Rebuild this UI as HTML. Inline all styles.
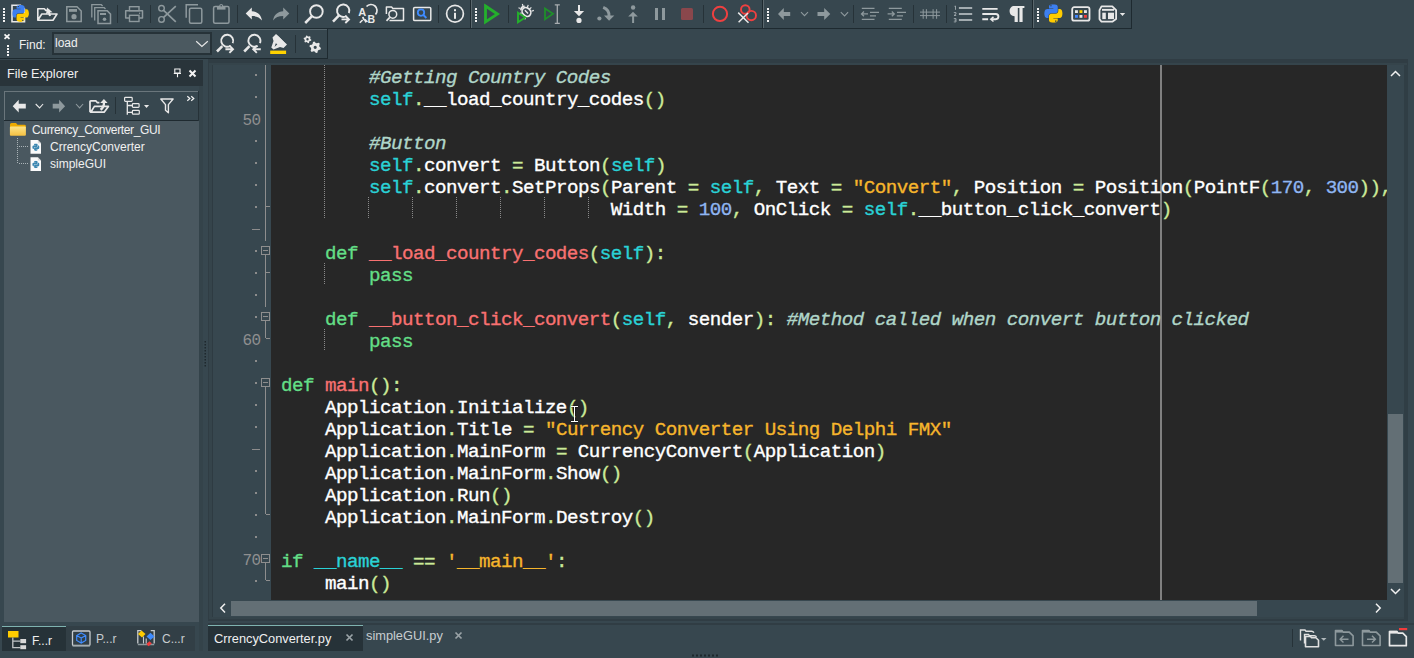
<!DOCTYPE html>
<html><head><meta charset="utf-8"><style>
*{box-sizing:border-box}
html,body{margin:0;padding:0;width:1414px;height:658px;overflow:hidden;background:#37474f;font-family:"Liberation Sans",sans-serif;position:relative}
.a{position:absolute}
#ov{position:absolute;left:0;top:0;width:1414px;height:658px;overflow:visible}
#code{position:absolute;left:271px;top:65px;width:1116px;height:535px;background:#272727;overflow:hidden}
#code pre{position:absolute;left:10px;top:1.5px;margin:0;font-family:"Liberation Mono",monospace;font-size:19.2px;letter-spacing:-0.52px;line-height:22px;color:#ffffff;white-space:pre;-webkit-text-stroke:0.35px currentColor}
.cm{color:#b0d6c9;font-style:italic}
.kw{color:#63de86}
.fn{color:#f87171}
.sf{color:#2ad2d6}
.op{color:#cbea98}
.st{color:#f6b52c}
.nu{color:#8fb6f2}
.ln{position:absolute;font-family:"Liberation Mono",monospace;font-size:16px;letter-spacing:-0.6px;color:#8f8f8f;text-align:right;width:40px;left:220.5px}
.ui{position:absolute;font-family:"Liberation Sans",sans-serif;color:#f0f0f0;white-space:pre}
</style></head><body>
<div class="a" style="left:0px;top:28px;width:470px;height:1px;background:#1e2a30;"></div>
<div class="a" style="left:470px;top:0px;width:1px;height:29px;background:#1e2a30;"></div>
<div class="a" style="left:470px;top:28px;width:292px;height:1px;background:#1e2a30;"></div>
<div class="a" style="left:762px;top:0px;width:1px;height:29px;background:#1e2a30;"></div>
<div class="a" style="left:762px;top:28px;width:270px;height:1px;background:#1e2a30;"></div>
<div class="a" style="left:1032px;top:0px;width:1px;height:29px;background:#1e2a30;"></div>
<div class="a" style="left:1032px;top:28px;width:99px;height:1px;background:#1e2a30;"></div>
<div class="a" style="left:1131px;top:0px;width:1px;height:29px;background:#1e2a30;"></div>
<div class="a" style="left:471px;top:0px;width:1px;height:28px;background:#5a676d;"></div>
<div class="a" style="left:0px;top:29px;width:327px;height:1px;background:#56656c;"></div>
<div class="a" style="left:0px;top:58px;width:328px;height:1px;background:#1e2a30;"></div>
<div class="a" style="left:327px;top:29px;width:1px;height:30px;background:#1e2a30;"></div>
<div class="ui" style="left:19px;top:38px;font-size:12px;color:#f0f0f0;">Find:</div>
<div class="a" style="left:52px;top:32px;width:160px;height:23px;background:#263238;"></div>
<div class="a" style="left:54px;top:34px;width:156px;height:19px;background:#4b5960;"></div>
<div class="ui" style="left:55px;top:36px;font-size:12px;color:#f0f0f0;">load</div>
<div class="a" style="left:0px;top:60px;width:203px;height:26px;background:#29343a;"></div>
<div class="ui" style="left:7px;top:67px;font-size:12.7px;color:#f0f0f0;">File Explorer</div>
<div class="a" style="left:4px;top:91px;width:195px;height:30px;background:#6a767c;"></div>
<div class="a" style="left:5px;top:92px;width:194px;height:28px;background:#37474f;"></div>
<div class="a" style="left:4px;top:120px;width:195px;height:1px;background:#1f2a30;"></div>
<div class="a" style="left:198px;top:91px;width:1px;height:30px;background:#263238;"></div>
<div class="a" style="left:4px;top:121px;width:196px;height:501px;background:#4a5860;"></div>
<div class="ui" style="left:32px;top:123px;font-size:12px;color:#f0f0f0;letter-spacing:-0.35px">Currency_Converter_GUI</div>
<div class="ui" style="left:50px;top:140px;font-size:12px;color:#f0f0f0;">CrrencyConverter</div>
<div class="ui" style="left:50px;top:157px;font-size:12px;color:#f0f0f0;">simpleGUI</div>
<div class="a" style="left:2px;top:626px;width:193px;height:25px;background:#323f46;"></div>
<div class="a" style="left:2px;top:626px;width:64px;height:25px;background:#263238;"></div>
<div class="a" style="left:2px;top:626px;width:64px;height:1px;background:#7fb3b0;"></div>
<div class="ui" style="left:32px;top:634px;font-size:12px;color:#f0f0f0;">F...r</div>
<div class="ui" style="left:96px;top:632px;font-size:12px;color:#c8cdd0;">P...r</div>
<div class="ui" style="left:162px;top:632px;font-size:12px;color:#c8cdd0;">C...r</div>
<div class="a" style="left:199px;top:86px;width:4px;height:565px;background:#34434a;"></div>
<div class="a" style="left:208px;top:59px;width:1200px;height:562px;background:#303d44;"></div>
<div class="a" style="left:209px;top:63px;width:1198px;height:556px;background:#35444b;"></div>
<div class="a" style="left:212px;top:65px;width:1192px;height:552px;background:#37474f;"></div>
<div class="a" style="left:212px;top:65px;width:1px;height:552px;background:#2e3b42;"></div>
<div class="a" style="left:1404px;top:65px;width:4px;height:556px;background:#303e45;"></div>
<div class="a" style="left:255px;top:74px;width:2px;height:2px;background:#8c8c8c;"></div>
<div class="a" style="left:255px;top:96px;width:2px;height:2px;background:#8c8c8c;"></div>
<div class="ln" style="top:112px">50</div>
<div class="a" style="left:255px;top:140px;width:2px;height:2px;background:#8c8c8c;"></div>
<div class="a" style="left:255px;top:162px;width:2px;height:2px;background:#8c8c8c;"></div>
<div class="a" style="left:255px;top:184px;width:2px;height:2px;background:#8c8c8c;"></div>
<div class="a" style="left:255px;top:206px;width:2px;height:2px;background:#8c8c8c;"></div>
<div class="a" style="left:252px;top:229px;width:8px;height:1px;background:#8c8c8c;"></div>
<div class="a" style="left:255px;top:250px;width:2px;height:2px;background:#8c8c8c;"></div>
<div class="a" style="left:255px;top:272px;width:2px;height:2px;background:#8c8c8c;"></div>
<div class="a" style="left:255px;top:294px;width:2px;height:2px;background:#8c8c8c;"></div>
<div class="a" style="left:255px;top:316px;width:2px;height:2px;background:#8c8c8c;"></div>
<div class="ln" style="top:332px">60</div>
<div class="a" style="left:255px;top:360px;width:2px;height:2px;background:#8c8c8c;"></div>
<div class="a" style="left:255px;top:382px;width:2px;height:2px;background:#8c8c8c;"></div>
<div class="a" style="left:255px;top:404px;width:2px;height:2px;background:#8c8c8c;"></div>
<div class="a" style="left:255px;top:426px;width:2px;height:2px;background:#8c8c8c;"></div>
<div class="a" style="left:252px;top:449px;width:8px;height:1px;background:#8c8c8c;"></div>
<div class="a" style="left:255px;top:470px;width:2px;height:2px;background:#8c8c8c;"></div>
<div class="a" style="left:255px;top:492px;width:2px;height:2px;background:#8c8c8c;"></div>
<div class="a" style="left:255px;top:514px;width:2px;height:2px;background:#8c8c8c;"></div>
<div class="a" style="left:255px;top:536px;width:2px;height:2px;background:#8c8c8c;"></div>
<div class="ln" style="top:552px">70</div>
<div class="a" style="left:255px;top:580px;width:2px;height:2px;background:#8c8c8c;"></div>
<div class="a" style="left:265px;top:65px;width:1px;height:176px;background:#8e8e8e;"></div>
<div class="a" style="left:266px;top:206px;width:4px;height:1px;background:#8e8e8e;"></div>
<div class="a" style="left:261px;top:246px;width:9px;height:9px;border:1px solid #8e8e8e"><div class="a" style="left:1px;top:3px;width:5px;height:1px;background:#8e8e8e"></div></div>
<div class="a" style="left:265px;top:255px;width:1px;height:52px;background:#8e8e8e;"></div>
<div class="a" style="left:266px;top:272px;width:4px;height:1px;background:#8e8e8e;"></div>
<div class="a" style="left:261px;top:312px;width:9px;height:9px;border:1px solid #8e8e8e"><div class="a" style="left:1px;top:3px;width:5px;height:1px;background:#8e8e8e"></div></div>
<div class="a" style="left:265px;top:321px;width:1px;height:17px;background:#8e8e8e;"></div>
<div class="a" style="left:266px;top:338px;width:4px;height:1px;background:#8e8e8e;"></div>
<div class="a" style="left:261px;top:378px;width:9px;height:9px;border:1px solid #8e8e8e"><div class="a" style="left:1px;top:3px;width:5px;height:1px;background:#8e8e8e"></div></div>
<div class="a" style="left:265px;top:387px;width:1px;height:127px;background:#8e8e8e;"></div>
<div class="a" style="left:266px;top:514px;width:4px;height:1px;background:#8e8e8e;"></div>
<div class="a" style="left:261px;top:554px;width:9px;height:9px;border:1px solid #8e8e8e"><div class="a" style="left:1px;top:3px;width:5px;height:1px;background:#8e8e8e"></div></div>
<div class="a" style="left:265px;top:563px;width:1px;height:17px;background:#8e8e8e;"></div>
<div class="a" style="left:266px;top:580px;width:4px;height:1px;background:#8e8e8e;"></div>
<div id="code"><div class="a" style="left:53px;top:0px;width:1px;height:154px;background-image:linear-gradient(#8a8a8a 50%,transparent 50%);background-size:1px 2px"></div><div class="a" style="left:97px;top:132px;width:1px;height:22px;background-image:linear-gradient(#8a8a8a 50%,transparent 50%);background-size:1px 2px"></div><div class="a" style="left:141px;top:132px;width:1px;height:22px;background-image:linear-gradient(#8a8a8a 50%,transparent 50%);background-size:1px 2px"></div><div class="a" style="left:185px;top:132px;width:1px;height:22px;background-image:linear-gradient(#8a8a8a 50%,transparent 50%);background-size:1px 2px"></div><div class="a" style="left:229px;top:132px;width:1px;height:22px;background-image:linear-gradient(#8a8a8a 50%,transparent 50%);background-size:1px 2px"></div><div class="a" style="left:273px;top:132px;width:1px;height:22px;background-image:linear-gradient(#8a8a8a 50%,transparent 50%);background-size:1px 2px"></div><div class="a" style="left:317px;top:132px;width:1px;height:22px;background-image:linear-gradient(#8a8a8a 50%,transparent 50%);background-size:1px 2px"></div><div class="a" style="left:53px;top:198px;width:1px;height:22px;background-image:linear-gradient(#8a8a8a 50%,transparent 50%);background-size:1px 2px"></div><div class="a" style="left:53px;top:264px;width:1px;height:22px;background-image:linear-gradient(#8a8a8a 50%,transparent 50%);background-size:1px 2px"></div><div class="a" style="left:889px;top:0;width:2px;height:535px;background:#808080"></div><pre>        <span class="cm">#Getting Country Codes</span>
        <span class="sf">self</span><span class="op">.</span>__load_country_codes<span class="op">()</span>

        <span class="cm">#Button</span>
        <span class="sf">self</span><span class="op">.</span>convert <span class="op">=</span> Button<span class="op">(</span><span class="sf">self</span><span class="op">)</span>
        <span class="sf">self</span><span class="op">.</span>convert<span class="op">.</span>SetProps<span class="op">(</span>Parent <span class="op">=</span> <span class="sf">self</span><span class="op">,</span> Text <span class="op">=</span> <span class="st">"Convert"</span><span class="op">,</span> Position <span class="op">=</span> Position<span class="op">(</span>PointF<span class="op">(</span><span class="nu">170</span><span class="op">,</span> <span class="nu">300</span><span class="op">)),</span>
                              Width <span class="op">=</span> <span class="nu">100</span><span class="op">,</span> OnClick <span class="op">=</span> <span class="sf">self</span><span class="op">.</span>__button_click_convert<span class="op">)</span>

    <span class="kw">def</span> <span class="fn">__load_country_codes</span><span class="op">(</span><span class="sf">self</span><span class="op">):</span>
        <span class="kw">pass</span>

    <span class="kw">def</span> <span class="fn">__button_click_convert</span><span class="op">(</span><span class="sf">self</span><span class="op">,</span> sender<span class="op">):</span> <span class="cm">#Method called when convert button clicked</span>
        <span class="kw">pass</span>

<span class="kw">def</span> <span class="fn">main</span><span class="op">():</span>
    Application<span class="op">.</span>Initialize<span class="op">()</span>
    Application<span class="op">.</span>Title <span class="op">=</span> <span class="st">"Currency Converter Using Delphi FMX"</span>
    Application<span class="op">.</span>MainForm <span class="op">=</span> CurrencyConvert<span class="op">(</span>Application<span class="op">)</span>
    Application<span class="op">.</span>MainForm<span class="op">.</span>Show<span class="op">()</span>
    Application<span class="op">.</span>Run<span class="op">()</span>
    Application<span class="op">.</span>MainForm<span class="op">.</span>Destroy<span class="op">()</span>

<span class="kw">if</span> <span class="sf">__name__</span> <span class="op">==</span> <span class="st">'__main__'</span><span class="op">:</span>
    main<span class="op">()</span></pre></div>
<div class="a" style="left:1388px;top:414px;width:15px;height:169px;background:#636f75;"></div>
<div class="a" style="left:231px;top:601px;width:1026px;height:15px;background:#636f75;"></div>
<div class="a" style="left:208px;top:623px;width:1206px;height:2px;background:#303d44;"></div>
<div class="a" style="left:208px;top:625px;width:155px;height:26px;background:#263238;"></div>
<div class="a" style="left:208px;top:625px;width:155px;height:1px;background:#7fb3b0;"></div>
<div class="ui" style="left:214px;top:631px;font-size:12.8px;color:#f0f0f0;">CrrencyConverter.py</div>
<div class="ui" style="left:366px;top:628px;font-size:12.8px;color:#c8cdd0;">simpleGUI.py</div>
<svg id="ov" width="1414" height="658" viewBox="0 0 1414 658">
<defs><symbol id="py" viewBox="0 0 112 112"><path fill="#3d7ff0" d="M54.9 0.1C50.3 0.1 45.9 0.5 42.1 1.2 30.8 3.2 28.8 7.4 28.8 15.1V25.3H55.2V28.7H18.9C11.2 28.7 4.5 33.3 2.4 42.1 0 52.2-0.1 58.5 2.4 69 4.3 76.8 8.7 82.4 16.4 82.4H25.5V70.2C25.5 61.5 33.1 53.8 42.1 53.8H68.5C75.9 53.8 81.7 47.7 81.7 40.4V15.1C81.7 7.9 75.7 2.5 68.5 1.3 63.9 0.5 59.2 0.1 54.9 0.1ZM40.6 4.5A4.6 4.6 0 1 1 40.6 13.7 4.6 4.6 0 1 1 40.6 4.5Z"/><path fill="#ffcc00" d="M85.2 28.7V40.5C85.2 49.7 77.4 57.3 68.5 57.3H42.1C34.9 57.3 28.8 63.5 28.8 70.7V96C28.8 103.2 35.1 107.4 42.1 109.5 50.5 112 58.6 112.4 68.5 109.5 75.1 107.6 81.7 103.7 81.7 96V85.9H55.2V82.5H94.9C102.6 82.5 105.4 77.1 108.1 69 110.8 60.7 110.7 52.8 108.1 42.2 106.2 34.6 102.6 28.7 94.9 28.7ZM70 97.3A4.6 4.6 0 1 1 70 106.5 4.6 4.6 0 1 1 70 97.3Z"/></symbol><symbol id="pyd" viewBox="0 0 112 112"><path fill="#3b86b0" d="M54.9 0.1C50.3 0.1 45.9 0.5 42.1 1.2 30.8 3.2 28.8 7.4 28.8 15.1V25.3H55.2V28.7H18.9C11.2 28.7 4.5 33.3 2.4 42.1 0 52.2-0.1 58.5 2.4 69 4.3 76.8 8.7 82.4 16.4 82.4H25.5V70.2C25.5 61.5 33.1 53.8 42.1 53.8H68.5C75.9 53.8 81.7 47.7 81.7 40.4V15.1C81.7 7.9 75.7 2.5 68.5 1.3 63.9 0.5 59.2 0.1 54.9 0.1Z"/><path fill="#3b86b0" d="M85.2 28.7V40.5C85.2 49.7 77.4 57.3 68.5 57.3H42.1C34.9 57.3 28.8 63.5 28.8 70.7V96C28.8 103.2 35.1 107.4 42.1 109.5 50.5 112 58.6 112.4 68.5 109.5 75.1 107.6 81.7 103.7 81.7 96V85.9H55.2V82.5H94.9C102.6 82.5 105.4 77.1 108.1 69 110.8 60.7 110.7 52.8 108.1 42.2 106.2 34.6 102.6 28.7 94.9 28.7Z"/></symbol></defs>
<rect x="3" y="8" width="2" height="2" fill="#f4f4f4"/>
<rect x="3" y="11" width="2" height="2" fill="#f4f4f4"/>
<rect x="3" y="14" width="2" height="2" fill="#f4f4f4"/>
<rect x="3" y="17" width="2" height="2" fill="#f4f4f4"/>
<rect x="3" y="20" width="2" height="2" fill="#f4f4f4"/>
<path d="M12 5.2h8.5l4 4v12.6h-12.5z" fill="none" stroke="#e8e8e8" stroke-width="1.6"/>
<use href="#py" x="12.2" y="5" width="17" height="17"/>
<path d="M37.8 20.2v-11.4h6.5l1.5 1.6h3.5M37.8 20.2l4-6.2h15.2l-4 6.2z" fill="none" stroke="#e8e8e8" stroke-width="1.6" stroke-linejoin="round"/>
<path d="M47 7.5l5.5 4.8-2.5 0.2 1 3.2-2 0.6-1-3.2-2 1.2z" fill="#e8e8e8"/>
<path d="M66.8 6.8h10.2l4.2 4.2v10.4h-14.4z" fill="none" stroke="#8e999d" stroke-width="1.5"/>
<rect x="69" y="9" width="8" height="2.8" fill="#8e999d"/><circle cx="74" cy="16.7" r="2.6" fill="#8e999d"/>
<path d="M91.8 17.5v-12.8h9.5l1.3 1.3" fill="none" stroke="#8e999d" stroke-width="1.3"/>
<path d="M94.7 20.5v-12.8h9.5l1.3 1.3" fill="none" stroke="#8e999d" stroke-width="1.3"/>
<path d="M98 10.8h9.2l3.3 3.3v9.3h-12.5z" fill="none" stroke="#8e999d" stroke-width="1.5"/>
<rect x="100" y="13" width="6" height="2" fill="#8e999d"/><circle cx="104.5" cy="19.2" r="1.8" fill="#8e999d"/>
<rect x="117" y="5" width="1" height="18" fill="#263238"/>
<rect x="129.5" y="6.7" width="9.5" height="4" fill="none" stroke="#8e999d" stroke-width="1.4"/>
<path d="M129 18h-3.3v-7.2h16.8v7.2h-3.3" fill="none" stroke="#8e999d" stroke-width="1.5" stroke-linejoin="round"/>
<rect x="129.5" y="15.3" width="9.5" height="6.2" fill="none" stroke="#8e999d" stroke-width="1.4"/>
<circle cx="139.6" cy="13.3" r="0.7" fill="#8e999d"/>
<rect x="150" y="5" width="1" height="18" fill="#263238"/>
<circle cx="161.5" cy="8.3" r="2.8" fill="none" stroke="#8e999d" stroke-width="1.4"/><circle cx="161.5" cy="19.4" r="2.8" fill="none" stroke="#8e999d" stroke-width="1.4"/>
<path d="M163.6 10.3L175.8 21.8M163.6 17.4L175.8 6.2" stroke="#8e999d" stroke-width="1.7"/>
<path d="M186.2 17.8V4.8h11.8" fill="none" stroke="#8e999d" stroke-width="1.5"/>
<rect x="189.5" y="8.3" width="12.3" height="15" rx="1.5" fill="none" stroke="#8e999d" stroke-width="1.5"/>
<rect x="213.6" y="6.5" width="15.4" height="16.8" rx="1.5" fill="none" stroke="#8e999d" stroke-width="1.5"/>
<rect x="217" y="6" width="8.5" height="3.6" fill="#8e999d"/><circle cx="221.2" cy="5.8" r="1.9" fill="#8e999d"/><circle cx="221.2" cy="5.8" r="0.8" fill="#37474f"/>
<rect x="237" y="5" width="1" height="18" fill="#263238"/>
<path d="M245.7 13.5L251.8 7.6V11.2C257.5 11.6 261.2 15 262 20.6 259.6 17.5 256.5 16.1 251.8 16.1V19.4Z" fill="#e8e8e8"/>
<path d="M289.3 13.5L283.2 7.6V11.2C277.5 11.6 273.8 15 273 20.6 275.4 17.5 278.5 16.1 283.2 16.1V19.4Z" fill="#8e999d"/>
<rect x="297" y="5" width="1" height="18" fill="#263238"/>
<circle cx="316.4" cy="11.5" r="6.3" fill="none" stroke="#e8e8e8" stroke-width="1.9"/><path d="M312 16.2L305.2 23" stroke="#e8e8e8" stroke-width="2.5"/>
<path d="M346.5 16A6.2 6.2 0 1 1 348.9 13.2" fill="none" stroke="#e8e8e8" stroke-width="1.9"/><path d="M338.8 15.6L333 21.6" stroke="#e8e8e8" stroke-width="2.5"/>
<path d="M341.5 19.4h7.5M345.3 15.8l3.7 3.6-3.7 3.6" fill="none" stroke="#e8e8e8" stroke-width="1.9"/>
<text x="358.3" y="15.8" font-family="Liberation Sans" font-weight="bold" font-size="11" fill="#e8e8e8">A</text>
<path d="M366.5 6.5A6 6 0 1 1 375.5 14.5" fill="none" stroke="#e8e8e8" stroke-width="1.7"/>
<text x="367.6" y="22.8" font-family="Liberation Sans" font-weight="bold" font-size="10.5" fill="#e8e8e8">B</text>
<path d="M359.8 22.8L362.6 20M362.8 16.8q0.3 3 3.8 4.3M365.2 19.8l1.6 1.4-2 0.9" fill="none" stroke="#e8e8e8" stroke-width="1.6"/>
<path d="M386.4 14v-7h5.2l1.3 1.6h10.6v12h-14" fill="none" stroke="#e8e8e8" stroke-width="1.5" stroke-linejoin="round"/>
<circle cx="392.8" cy="14.3" r="3.9" fill="#37474f" stroke="#e8e8e8" stroke-width="1.5"/><path d="M389.8 17.4L386.5 20.8" stroke="#e8e8e8" stroke-width="1.7"/>
<rect x="413.6" y="7.4" width="17.2" height="13.2" rx="1.2" fill="none" stroke="#e8e8e8" stroke-width="1.5"/>
<circle cx="421" cy="12.6" r="3.2" fill="none" stroke="#3f8cff" stroke-width="1.8"/><path d="M423.4 15L426.4 18" stroke="#3f8cff" stroke-width="1.8"/>
<rect x="438" y="5" width="1" height="18" fill="#263238"/>
<circle cx="455" cy="13.7" r="8.4" fill="none" stroke="#e8e8e8" stroke-width="1.7"/><rect x="454" y="9.2" width="2" height="2" fill="#e8e8e8"/><rect x="454" y="12.8" width="2" height="6" fill="#e8e8e8"/>
<rect x="475" y="8" width="2" height="2" fill="#f4f4f4"/>
<rect x="475" y="11" width="2" height="2" fill="#f4f4f4"/>
<rect x="475" y="14" width="2" height="2" fill="#f4f4f4"/>
<rect x="475" y="17" width="2" height="2" fill="#f4f4f4"/>
<rect x="475" y="20" width="2" height="2" fill="#f4f4f4"/>
<path d="M485.5 6L497.5 14 485.5 22Z" fill="none" stroke="#24b02c" stroke-width="2.8" stroke-linejoin="miter"/>
<rect x="508" y="5" width="1" height="18" fill="#263238"/>
<g transform="translate(-1.5 -1.5) rotate(-45 527 12.5) translate(527 12.5) scale(0.9) translate(-527 -12.5)"><ellipse cx="527" cy="14" rx="4.3" ry="5.3" fill="#37474f" stroke="#e8e8e8" stroke-width="1.9"/><path d="M524 8.2q3-2.8 6 0" fill="none" stroke="#e8e8e8" stroke-width="1.8"/><path d="M527 11.5v5" stroke="#e8e8e8" stroke-width="1.6"/><path d="M522.5 11l-2.5-1.2M522.3 14.2h-2.8M522.5 17.3l-2.5 1.3M531.5 11l2.5-1.2M531.7 14.2h2.8M531.5 17.3l2.5 1.3M525 6.5l-1-2M529 6.5l1-2" stroke="#e8e8e8" stroke-width="1.3" fill="none"/></g>
<path d="M518 12.8L525.2 17.5 518 22.2Z" fill="#37474f" stroke="#24b02c" stroke-width="1.9"/>
<path d="M545 8.5L553 13.8 545 19.2Z" fill="none" stroke="#1f8f2a" stroke-width="1.8"/>
<path d="M554.8 4.8h5M557.3 4.8v18.6M554.8 23.4h5" stroke="#a8adb0" stroke-width="1.3" fill="none"/>
<rect x="578" y="5" width="2" height="7" fill="#e8e8e8"/><path d="M573.9 11.1h10.2L579 16.2Z" fill="#e8e8e8"/><circle cx="579" cy="20.4" r="2.6" fill="#e8e8e8"/>
<circle cx="599.4" cy="18.5" r="2.1" fill="#8e999d"/><path d="M603.2 7.3C607.5 9 609.5 12 609 16.5" fill="none" stroke="#8e999d" stroke-width="3"/><path d="M604 15.6h10.3l-5.2 5.2Z" fill="#8e999d"/>
<circle cx="633.1" cy="7.5" r="2.2" fill="#8e999d"/><path d="M628.2 16.6h9.6l-4.8-4.9Z" fill="#8e999d"/><rect x="632.1" y="16" width="2" height="7" fill="#8e999d"/>
<rect x="655" y="8" width="3" height="12" fill="#8e999d"/><rect x="662" y="8" width="3" height="12" fill="#8e999d"/>
<rect x="681" y="8" width="12" height="12" rx="1.5" fill="#8a474c"/>
<rect x="703" y="5" width="1" height="18" fill="#263238"/>
<circle cx="720" cy="13.9" r="7.1" fill="none" stroke="#ef4040" stroke-width="2"/>
<circle cx="745.3" cy="9.5" r="4.3" fill="none" stroke="#ef4040" stroke-width="1.9"/><circle cx="751.3" cy="15.6" r="4.7" fill="none" stroke="#ef4040" stroke-width="1.9"/>
<path d="M738.2 12.6L748.5 22.8M738.6 22.3L748 13" stroke="#e8e8e8" stroke-width="1.5"/>
<rect x="763" y="0" width="1" height="28" fill="#5a676d"/>
<rect x="767" y="8" width="2" height="2" fill="#f4f4f4"/>
<rect x="767" y="11" width="2" height="2" fill="#f4f4f4"/>
<rect x="767" y="14" width="2" height="2" fill="#f4f4f4"/>
<rect x="767" y="17" width="2" height="2" fill="#f4f4f4"/>
<rect x="767" y="20" width="2" height="2" fill="#f4f4f4"/>
<path d="M778 13.9L783.8 8V12.1H790.2V15.9H783.8V20Z" fill="#8e999d"/>
<path d="M801 12.1l3.5 3.5 3.5-3.5" fill="none" stroke="#8e999d" stroke-width="1.1"/>
<path d="M830.3 13.9L824.2 8V12.1H817.5V15.9H824.2V20Z" fill="#8e999d"/>
<path d="M840.8 12.1l3.8 3.8 3.5-3.8" fill="none" stroke="#8e999d" stroke-width="1.1"/>
<rect x="853" y="5" width="1" height="18" fill="#263238"/>
<path d="M861.8 8.3h12.7M870 12.4h9M870 15.9h6M861.8 19.4h12.7" stroke="#8e999d" stroke-width="1.3"/><path d="M868 13.9h-6M864 11.5l-2.5 2.4 2.5 2.4" stroke="#8e999d" stroke-width="1.3" fill="none"/>
<path d="M888.8 8.3h13M897 12.4h9M896.8 15.9h6.2M888.8 19.4h13" stroke="#8e999d" stroke-width="1.3"/><path d="M887.6 13.9h6.5M891.8 11.5l2.5 2.4-2.5 2.4" stroke="#8e999d" stroke-width="1.3" fill="none"/>
<rect x="913" y="5" width="1" height="18" fill="#263238"/>
<path d="M920 12.1h20M920 15.6h20M923.2 9.2v9.6M926.4 9.2v9.6M933.1 9.2v9.6M936.6 9.2v9.6" stroke="#8e999d" stroke-width="1"/>
<rect x="946" y="5" width="1" height="18" fill="#263238"/>
<path d="M958.9 8h13.3M958.9 14h13.3M958.9 20h13.3" stroke="#a3acb0" stroke-width="2"/>
<path d="M954.5 6.3l1-0.3v3.8M953.8 12.6h2.2v1.3l-2 1.6h2.2M953.8 18.6h2.2v3.3h-2.2M954.5 20.2h1.5" stroke="#a3acb0" stroke-width="0.9" fill="none"/>
<path d="M982.3 8.9h15.3M982.3 14h13.5a2.6 2.6 0 0 1 0 5.2h-3.8M982.3 19.2h5.8" stroke="#e8e8e8" stroke-width="1.9" fill="none"/><path d="M993.5 16.9l-2.7 2.3 2.7 2.3" stroke="#e8e8e8" stroke-width="1.5" fill="none"/>
<path d="M1014.2 6h10.2v1.9h-1.8V22h-3.2V7.9h-1.6V22h-3.2V16.2C1011.5 16.2 1009.6 14 1009.6 11.1 1009.6 8.1 1011.6 6 1014.2 6Z" fill="#e8e8e8"/>
<rect x="1033" y="0" width="1" height="28" fill="#5a676d"/>
<rect x="1037" y="8" width="2" height="2" fill="#f4f4f4"/>
<rect x="1037" y="11" width="2" height="2" fill="#f4f4f4"/>
<rect x="1037" y="14" width="2" height="2" fill="#f4f4f4"/>
<rect x="1037" y="17" width="2" height="2" fill="#f4f4f4"/>
<rect x="1037" y="20" width="2" height="2" fill="#f4f4f4"/>
<use href="#py" x="1044" y="4.3" width="19" height="18.5"/>
<rect x="1072.2" y="7.2" width="17.3" height="13.5" rx="2" fill="none" stroke="#e8e8e8" stroke-width="1.8"/>
<rect x="1075" y="10.2" width="2.9" height="2.8" fill="#e8e8e8"/>
<rect x="1079.5" y="10.2" width="2.9" height="2.8" fill="#ffd000"/>
<rect x="1084" y="10.2" width="2.9" height="2.8" fill="#e8e8e8"/>
<rect x="1075" y="15" width="2.9" height="2.8" fill="#3f86ff"/>
<rect x="1079.5" y="15" width="2.9" height="2.8" fill="#e8e8e8"/>
<rect x="1084" y="15" width="2.9" height="2.8" fill="#f03c3c"/>
<path d="M1101.5 6.3h10.8l3.8 3.8v9l-3.8 2.6h-10.8l-2-2.6v-9z" fill="none" stroke="#e8e8e8" stroke-width="1.8" stroke-linejoin="round"/>
<rect x="1102" y="8.9" width="12" height="1.9" fill="#e8e8e8"/><rect x="1102.3" y="12.7" width="3.5" height="6.4" fill="#e8e8e8"/><rect x="1108" y="12.7" width="6" height="6.4" fill="#e8e8e8"/>
<path d="M1119.8 13h5.4l-2.7 2.9z" fill="#e8e8e8"/>
<path d="M4.5 34.3l5 4.6M9.5 34.3l-5 4.6" stroke="#f4f4f4" stroke-width="1.8"/>
<rect x="7" y="45" width="2" height="2" fill="#f4f4f4"/>
<rect x="7" y="48" width="2" height="2" fill="#f4f4f4"/>
<rect x="7" y="51" width="2" height="2" fill="#f4f4f4"/>
<rect x="7" y="54" width="2" height="2" fill="#f4f4f4"/>
<path d="M196.2 41.3l5.7 5.1 5.9-5.1" fill="none" stroke="#e8e8e8" stroke-width="1.2"/>
<path d="M230.5 45.8A6 6 0 1 1 232.7 43.2" fill="none" stroke="#e8e8e8" stroke-width="1.9"/><path d="M222.3 46.2L217 51.5" stroke="#e8e8e8" stroke-width="2.6"/>
<path d="M225.4 49.2h8M229.4 45.6l3.6 3.6-3.6 3.6" fill="none" stroke="#e8e8e8" stroke-width="1.9"/>
<path d="M257.7 45.8A6 6 0 1 1 259.9 43.2" fill="none" stroke="#e8e8e8" stroke-width="1.9"/><path d="M249.5 46.2L244.2 51.5" stroke="#e8e8e8" stroke-width="2.6"/>
<path d="M260.8 49.2h-8M256.8 45.6l-3.6 3.6 3.6 3.6" fill="none" stroke="#e8e8e8" stroke-width="1.9"/>
<path d="M279.2 35.3L287 43 283.5 46.5 280 45.5 273.5 48 271.3 46 273.5 39.5 272.5 36 276 32.5Z" fill="#e8e8e8" transform="translate(0,1.5)"/>
<path d="M279.6 36.5l6 6" stroke="#37474f" stroke-width="0.9"/><path d="M274.5 45.5l2.8-2.8-1.5-1z" fill="#37474f" transform="translate(0,1.5)"/>
<rect x="270.2" y="50.6" width="15.9" height="3.4" fill="#ffd200"/>
<rect x="295" y="35" width="1" height="18" fill="#263238"/>
<path d="M311.37,39.81 L311.10,40.79 L309.80,41.07 L309.27,41.60 L308.99,42.90 L308.01,43.17 L307.12,42.18 L306.39,41.98 L305.13,42.39 L304.41,41.67 L304.82,40.41 L304.62,39.68 L303.63,38.79 L303.90,37.81 L305.20,37.53 L305.73,37.00 L306.01,35.70 L306.99,35.43 L307.88,36.42 L308.61,36.62 L309.87,36.21 L310.59,36.93 L310.18,38.19 L310.38,38.92Z M308.7,39.3 A1.2,1.2 0 1 0 306.3,39.3 A1.2,1.2 0 1 0 308.7,39.3Z" fill="#e8e8e8" fill-rule="evenodd"/>
<path d="M320.95,48.06 L320.56,49.52 L318.61,49.92 L317.82,50.71 L317.42,52.66 L315.96,53.05 L314.64,51.56 L313.55,51.27 L311.67,51.90 L310.60,50.83 L311.23,48.95 L310.94,47.86 L309.45,46.54 L309.84,45.08 L311.79,44.68 L312.58,43.89 L312.98,41.94 L314.44,41.55 L315.76,43.04 L316.85,43.33 L318.73,42.70 L319.80,43.77 L319.17,45.65 L319.46,46.74Z M316.8,47.3 A1.6,1.6 0 1 0 313.59999999999997,47.3 A1.6,1.6 0 1 0 316.8,47.3Z" fill="#e8e8e8" fill-rule="evenodd"/>
<path d="M174.8 69h5.2v4h-5.2zM173.8 73.5h7.2M177.5 74v3.2" fill="none" stroke="#f4f4f4" stroke-width="1.1"/>
<path d="M189.5 70.5l6 6M195.5 70.5l-6 6" stroke="#f4f4f4" stroke-width="2"/>
<path d="M12.7 106.2L18.7 99.8V103.7H25.8V108.6H18.7V112.4Z" fill="#e8e8e8"/>
<path d="M35.7 104l3.9 3.9 3.5-3.9" fill="none" stroke="#e8e8e8" stroke-width="1.1"/>
<path d="M65.1 106.2L59.1 99.8V103.7H52.7V108.6H59.1V112.4Z" fill="#8e999d"/>
<path d="M76 104l3.6 3.9 3.5-3.9" fill="none" stroke="#8e999d" stroke-width="1.1"/>
<path d="M90 112.2V101.6q0-0.8 0.8-0.8h5l1.6 1.9h2M90.8 112.2l3.6-5.8h14l-4.3 5.8z" fill="none" stroke="#e8e8e8" stroke-width="1.7" stroke-linejoin="round"/>
<path d="M100.2 103L103.9 99 107.6 103Z" fill="#e8e8e8"/><path d="M103.9 102.5Q104.3 107.3 100.5 109.8" fill="none" stroke="#e8e8e8" stroke-width="2.3"/>
<rect x="115" y="97" width="1" height="17" fill="#263238"/>
<rect x="124.6" y="97.4" width="7.6" height="4" rx="0.8" fill="none" stroke="#e8e8e8" stroke-width="1.2"/><path d="M127.3 101.5V114.8M127.3 105.5h5M127.3 112.3h5" stroke="#e8e8e8" stroke-width="1.3" fill="none"/><rect x="132.4" y="103.6" width="6.7" height="3.8" rx="0.8" fill="none" stroke="#e8e8e8" stroke-width="1.2"/><rect x="132.4" y="110.4" width="6.9" height="3.8" rx="0.8" fill="none" stroke="#e8e8e8" stroke-width="1.2"/>
<path d="M144 105.1h5.1l-2.55 2.9z" fill="#e8e8e8"/>
<path d="M160.8 99h12.3l-4.7 5.6v8.2l-2.9-2.6v-5.6z" fill="none" stroke="#e8e8e8" stroke-width="1.4" stroke-linejoin="round"/>
<path d="M187.3 96.2l2.6 2.3-2.6 2.3M191.2 96.2l2.6 2.3-2.6 2.3" fill="none" stroke="#f4f4f4" stroke-width="1.2"/>
<path d="M1391 76l4.5-4.5 4.5 4.5" fill="none" stroke="#f0f0f0" stroke-width="1.5"/>
<path d="M1391 589l4.5 4.5 4.5-4.5" fill="none" stroke="#f0f0f0" stroke-width="1.5"/>
<path d="M225 603.8l-4.2 4.3 4.2 4.3" fill="none" stroke="#f0f0f0" stroke-width="1.5"/>
<path d="M1376 603.8l4.2 4.3-4.2 4.3" fill="none" stroke="#f0f0f0" stroke-width="1.5"/>
<rect x="204.5" y="341" width="1.5" height="1.5" fill="#1e282d"/>
<rect x="204.5" y="344" width="1.5" height="1.5" fill="#1e282d"/>
<rect x="204.5" y="347" width="1.5" height="1.5" fill="#1e282d"/>
<rect x="204.5" y="350" width="1.5" height="1.5" fill="#1e282d"/>
<rect x="204.5" y="353" width="1.5" height="1.5" fill="#1e282d"/>
<rect x="204.5" y="356" width="1.5" height="1.5" fill="#1e282d"/>
<rect x="204.5" y="359" width="1.5" height="1.5" fill="#1e282d"/>
<rect x="204.5" y="362" width="1.5" height="1.5" fill="#1e282d"/>
<rect x="204.5" y="365" width="1.5" height="1.5" fill="#1e282d"/>
<rect x="692" y="654.5" width="2" height="2" fill="#1e282d"/>
<rect x="696" y="654.5" width="2" height="2" fill="#1e282d"/>
<rect x="700" y="654.5" width="2" height="2" fill="#1e282d"/>
<rect x="704" y="654.5" width="2" height="2" fill="#1e282d"/>
<rect x="708" y="654.5" width="2" height="2" fill="#1e282d"/>
<rect x="712" y="654.5" width="2" height="2" fill="#1e282d"/>
<rect x="716" y="654.5" width="2" height="2" fill="#1e282d"/>
<path d="M346.5 634.5l6 6M352.5 634.5l-6 6" stroke="#9aa3a7" stroke-width="1.7"/>
<path d="M455.5 632.5l6 6M461.5 632.5l-6 6" stroke="#9aa3a7" stroke-width="1.7"/>
<rect x="8" y="631" width="10.5" height="6.5" fill="#ffcc00"/>
<path d="M12.8 637.5v10.2h7.5M12.8 641.2h7.5" stroke="#c0c4c6" stroke-width="1.3" fill="none"/><rect x="20.3" y="639" width="5.8" height="4.2" fill="#d8d8d8"/><rect x="20.3" y="645.2" width="5.8" height="4" fill="#d8d8d8"/>
<rect x="72.5" y="631" width="17.5" height="14.5" rx="1" fill="none" stroke="#c8cccf" stroke-width="1.3"/><path d="M72.5 646h17.5" stroke="#8e999d" stroke-width="1.2"/>
<path d="M81.2 633l4.5 2.5v5l-4.5 2.5-4.5-2.5v-5z M76.7 635.5l4.5 2.5 4.5-2.5M81.2 638v5" fill="none" stroke="#3f8cff" stroke-width="1.2"/>
<path d="M137.8 643.5v-12.8h3.5M154.2 643.5v-12.8h-3.5" fill="none" stroke="#c8cccf" stroke-width="1.3"/><path d="M137.8 644.5h16.4" stroke="#8e999d" stroke-width="1.5"/>
<path d="M141.5 630.6l4 3.5-3.5 3.5-4-3.5z" fill="#ffcc00"/><path d="M150.5 632.8l4 3.6-4 3.6-4-3.6z" fill="#3f8cff"/><path d="M149.5 641.2l2.3 2.3-3.2 2.8-2.3-2.3z" fill="#f03c3c"/><path d="M143.5 636.5v7M146.2 638.5v5" stroke="#c8cccf" stroke-width="1.1"/>
<rect x="1292" y="629" width="1" height="18" fill="#263238"/>
<path d="M1300.5 640.5v-10.5h4.5l1 1.2h5.5q1.5 0 2.5 1.5" fill="none" stroke="#e0e0e0" stroke-width="1.4"/>
<path d="M1304.5 643.5v-9h4l1 1.2h5q1.3 0 2 1.3" fill="none" stroke="#e0e0e0" stroke-width="1.4"/>
<path d="M1305.5 646.8v-10.3h5l1 1.2h4.5l2.5 2.5v6.6z" fill="#37474f" stroke="#e0e0e0" stroke-width="1.6" stroke-linejoin="round"/>
<path d="M1321 638h5.5l-2.75 2.8z" fill="#b0b8bb"/>
<path d="M1335.5 630.5h6.3l1.2 1.6h6.3l3.8 3.8v9.6h-17.6z" fill="none" stroke="#8e999d" stroke-width="1.6" stroke-linejoin="round"/><rect x="1335.5" y="630" width="7" height="2.6" fill="#8e999d"/>
<path d="M1348.5 639.2h-8.5M1343.5 635.8l-3.4 3.4 3.4 3.4" fill="none" stroke="#8e999d" stroke-width="1.4"/>
<path d="M1362.5 630.5h6.3l1.2 1.6h6.3l3.8 3.8v9.6h-17.6z" fill="none" stroke="#8e999d" stroke-width="1.6" stroke-linejoin="round"/><rect x="1362.5" y="630" width="7" height="2.6" fill="#8e999d"/>
<path d="M1367.0 639.2h8.5M1372.0 635.8l3.4 3.4-3.4 3.4" fill="none" stroke="#8e999d" stroke-width="1.4"/>
<path d="M1389.5 645.7v-14.2h7.3l1.2 1.6h4.8l3.5 3.5v9.1z" fill="none" stroke="#e8e8e8" stroke-width="1.7" stroke-linejoin="round"/><rect x="1389.5" y="630.8" width="8" height="2.8" fill="#e8e8e8"/>
<rect x="1399" y="628" width="8.2" height="2.2" fill="#f03c3c"/>
<defs><linearGradient id="fg" x1="0" y1="0" x2="0" y2="1"><stop offset="0" stop-color="#fde48a"/><stop offset="1" stop-color="#f5c040"/></linearGradient></defs>
<path d="M10 124.5q0-1.5 1.5-1.5h4.5l1.5 1.8h7q1.4 0 1.4 1.4v1.5h-15.9z" fill="#eeaa00"/>
<rect x="9.9" y="126.5" width="16" height="9.3" rx="1" fill="url(#fg)"/>
<path d="M17.5 138v26M19 146.5h10M19 163.5h10" stroke="#aab3b7" stroke-width="1" stroke-dasharray="1 1" fill="none"/>
<path d="M30.5 140h7.3l3.2 3.2v10.5h-10.5z" fill="#fafafa"/><path d="M37.8 140v3.2h3.2" fill="#d8d8d8"/>
<use href="#pyd" x="32.2" y="143.5" width="7.4" height="7.4"/>
<path d="M30.5 157.3h7.3l3.2 3.2v10.5h-10.5z" fill="#fafafa"/><path d="M37.8 157.3v3.2h3.2" fill="#d8d8d8"/>
<use href="#pyd" x="32.2" y="160.8" width="7.4" height="7.4"/>
<path d="M571 406.5h7M574.5 406.5v15M571 421.5h7" stroke="#000" stroke-width="2.6" fill="none" opacity="0.35"/>
<path d="M571 406.5h7M574.5 406.5v15M571 421.5h7" stroke="#fff" stroke-width="1" fill="none"/>
</svg>
</body></html>
